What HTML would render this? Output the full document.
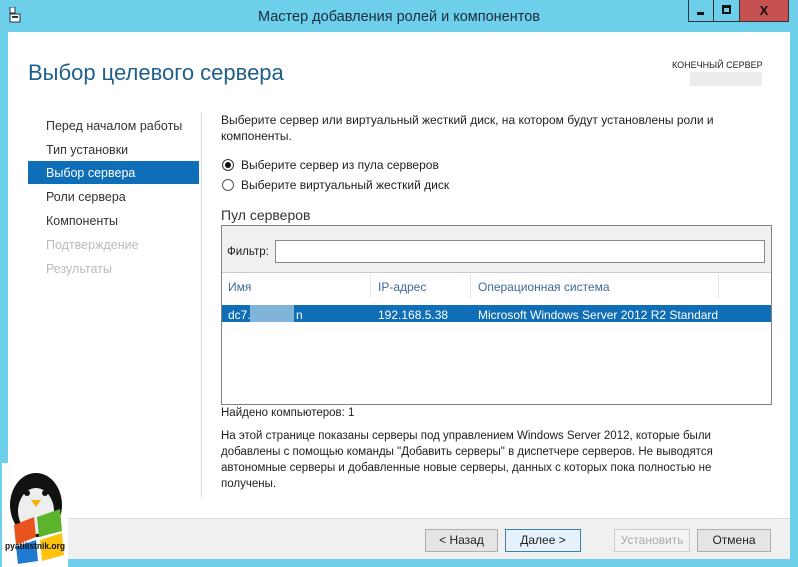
<!DOCTYPE html>
<html><head><meta charset="utf-8"><style>
*{margin:0;padding:0;box-sizing:border-box}
body{width:798px;height:567px;background:#6dcfe9;font-family:"Liberation Sans",sans-serif;font-size:12px;color:#1e1e1e;position:relative;overflow:hidden}
.a{position:absolute}
.win{left:8px;top:32px;width:782px;height:527px;background:#fff}
.nav{font-size:12.5px;color:#333;left:46px}
.btn{height:23px;border:1px solid #adadad;background:#e5e5e5;font-size:12px;text-align:center;line-height:21px;color:#222}
</style></head><body>
<svg class="a" style="left:9px;top:7px" width="12" height="16"><rect x="1" y="0" width="5" height="6" fill="#fff" stroke="#234" stroke-width="1"/><rect x="1" y="7" width="10" height="8" fill="#fff" stroke="#234"/><rect x="3" y="9" width="6" height="2" fill="#234"/></svg>
<div class="a" style="left:0;top:9px;width:798px;text-align:center;font-size:14.5px;color:#1a2c3a">Мастер добавления ролей и компонентов</div>
<div class="a" style="left:688px;top:0;width:26px;height:22px;border:1px solid #333;border-top:none"></div>
<div class="a" style="left:697px;top:12px;width:7px;height:3px;background:#111"></div>
<div class="a" style="left:713px;top:0;width:27px;height:22px;border:1px solid #333;border-top:none"></div>
<div class="a" style="left:722px;top:5px;width:9px;height:9px;border:2px solid #111;border-top-width:3px"></div>
<div class="a" style="left:739px;top:0;width:50px;height:22px;background:#c75050;border:1px solid #333;border-top:none;color:#111;font-weight:bold;text-align:center;line-height:21px;font-size:13px">X</div>
<div class="a win"></div>
<div class="a" style="left:28px;top:60px;font-size:22px;color:#1f5f8b">Выбор целевого сервера</div>
<div class="a" style="left:672px;top:60px;font-size:9px;color:#222">КОНЕЧНЫЙ СЕРВЕР</div>
<div class="a" style="left:690px;top:72px;width:72px;height:14px;background:#ececec"></div>
<div class="a nav" style="top:119px">Перед началом работы</div>
<div class="a nav" style="top:143px">Тип установки</div>
<div class="a" style="left:28px;top:161px;width:171px;height:23px;background:#0e6fb8"></div>
<div class="a nav" style="top:166px;color:#fff">Выбор сервера</div>
<div class="a nav" style="top:190px">Роли сервера</div>
<div class="a nav" style="top:214px">Компоненты</div>
<div class="a nav" style="top:238px;color:#bbb">Подтверждение</div>
<div class="a nav" style="top:262px;color:#bbb">Результаты</div>
<div class="a" style="left:201px;top:112px;width:1px;height:385px;background:#d8d8d8"></div>
<div class="a" style="left:221px;top:112px;width:510px;line-height:16px;font-size:12px">Выберите сервер или виртуальный жесткий диск, на котором будут установлены роли и компоненты.</div>
<div class="a" style="left:222px;top:159px;width:12px;height:12px;border:1px solid #333;border-radius:50%"><div class="a" style="left:2px;top:2px;width:6px;height:6px;border-radius:50%;background:#111"></div></div>
<div class="a" style="left:241px;top:158px">Выберите сервер из пула серверов</div>
<div class="a" style="left:222px;top:179px;width:12px;height:12px;border:1px solid #555;border-radius:50%"></div>
<div class="a" style="left:241px;top:178px">Выберите виртуальный жесткий диск</div>
<div class="a" style="left:221px;top:207px;font-size:14px;color:#333">Пул серверов</div>
<div class="a" style="left:221px;top:225px;width:551px;height:180px;border:1px solid #828282;background:#fff"></div>
<div class="a" style="left:222px;top:226px;width:549px;height:47px;background:#f0f0f0;border-bottom:1px solid #ccc"></div>
<div class="a" style="left:227px;top:246px;font-size:11.5px">Фильтр:</div>
<div class="a" style="left:275px;top:240px;width:490px;height:23px;border:1px solid #888;background:#fff"></div>
<div class="a" style="left:228px;top:280px;color:#3d6c97">Имя</div>
<div class="a" style="left:370px;top:274px;width:1px;height:24px;background:#e5e5e5"></div>
<div class="a" style="left:378px;top:280px;color:#3d6c97">IP-адрес</div>
<div class="a" style="left:470px;top:274px;width:1px;height:24px;background:#e5e5e5"></div>
<div class="a" style="left:478px;top:280px;color:#3d6c97">Операционная система</div>
<div class="a" style="left:718px;top:274px;width:1px;height:24px;background:#e5e5e5"></div>
<div class="a" style="left:222px;top:305px;width:549px;height:17px;background:#0f6eb5"></div>
<div class="a" style="left:228px;top:308px;color:#fff">dc7.</div>
<div class="a" style="left:250px;top:305px;width:44px;height:17px;background:#7fb3d8"></div>
<div class="a" style="left:296px;top:308px;color:#fff">n</div>
<div class="a" style="left:378px;top:308px;color:#fff">192.168.5.38</div>
<div class="a" style="left:478px;top:308px;color:#fff">Microsoft Windows Server 2012 R2 Standard</div>
<div class="a" style="left:221px;top:407px;font-size:11.5px">Найдено компьютеров: 1</div>
<div class="a" style="left:221px;top:428px;width:545px;line-height:16px;font-size:11.5px">На этой странице показаны серверы под управлением Windows Server 2012, которые были добавлены с помощью команды "Добавить серверы" в диспетчере серверов. Не выводятся автономные серверы и добавленные новые серверы, данных с которых пока полностью не получены.</div>
<div class="a" style="left:8px;top:518px;width:782px;height:41px;background:#f0f0f0;border-top:1px solid #dcdcdc"></div>
<div class="a btn" style="left:425px;top:529px;width:73px">&lt; Назад</div>
<div class="a btn" style="left:505px;top:529px;width:76px;border-color:#3c7fb1;background:#e5f1fb">Далее &gt;</div>
<div class="a btn" style="left:614px;top:529px;width:76px;color:#aaa;background:#f4f4f4;border-color:#ccc">Установить</div>
<div class="a btn" style="left:697px;top:529px;width:74px">Отмена</div>
<div class="a" style="left:2px;top:463px;width:66px;height:104px;background:#fff"></div>
<svg class="a" style="left:2px;top:463px" width="66" height="104">
<ellipse cx="34" cy="42" rx="26" ry="32" fill="#111"/><ellipse cx="34" cy="48" rx="18" ry="23" fill="#eee"/>
<circle cx="25" cy="30" r="3" fill="#111"/><circle cx="43" cy="30" r="3" fill="#111"/><path d="M29 37 L39 37 L34 44Z" fill="#f2b200"/>
<path d="M12 62 L32 54 L34 74 L14 82Z" fill="#e8541c"/><path d="M35 54 L58 46 L60 68 L37 74Z" fill="#5cb42d"/>
<path d="M14 84 L34 77 L36 98 L16 101Z" fill="#1f7ad1"/><path d="M38 77 L60 70 L62 92 L40 98Z" fill="#ffc20e"/>
<text x="33" y="86" font-family="Liberation Sans" font-weight="bold" font-size="9" fill="#111" text-anchor="middle" textLength="60" lengthAdjust="spacingAndGlyphs">pyatilistnik.org</text>
</svg>
</body></html>
